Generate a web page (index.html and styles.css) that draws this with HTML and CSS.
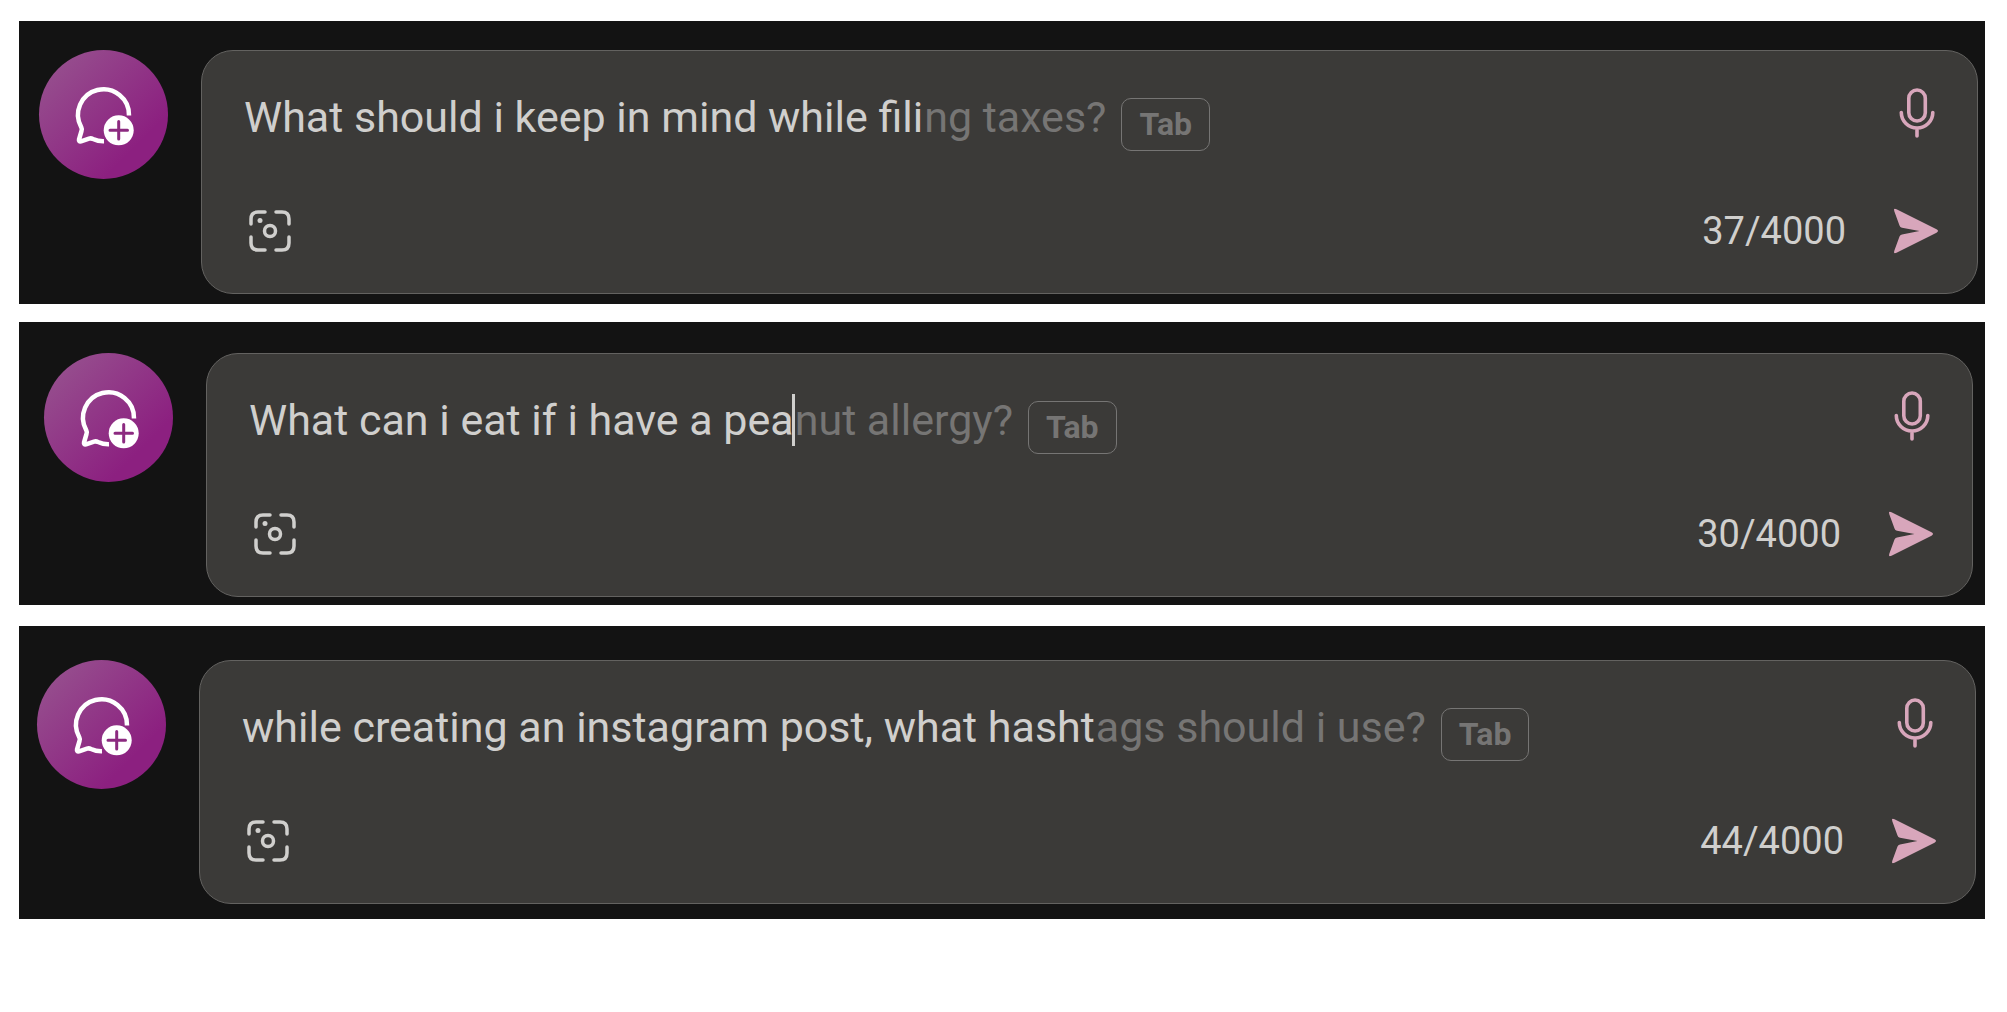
FILE: index.html
```html
<!DOCTYPE html>
<html lang="en">
<head>
  <meta charset="UTF-8" />
  <meta name="viewport" content="width=device-width, initial-scale=1" />
  <title>Chat autocomplete</title>
  <link rel="stylesheet" href="styles.css">
</head>
<body>

  <!-- SHARED ICONS -->
  <svg class="sprite" aria-hidden="true">
    <symbol id="icon-new-topic" viewBox="0 0 129 129">
      <path d="M90 65.500A25.500 25.500 0 1 0 42.300 77.300Q43.200 79 42.500 81L40 89.500Q39.500 91.800 42 91.300L50 88.600Q52 88 54 89Q59.500 91.500 65 91.300" fill="none" stroke="#fff" stroke-width="4.500" stroke-linecap="butt" stroke-linejoin="round" />
      <circle cx="79.700" cy="80.300" r="15" fill="#fff" />
      <path d="M79.700 71.500V89M71 80.300H88.500" stroke="#8c2a80" stroke-width="3" stroke-linecap="round" />
    </symbol>
    <symbol id="icon-mic" viewBox="0 0 48 52">
      <rect x="16.800" y="3" width="16.500" height="31" rx="8.250" fill="none" stroke="currentColor" stroke-width="3.600" />
      <path d="M9.300 25.500A15.750 15.500 0 0 0 40.800 25.500M25 41V49" fill="none" stroke="currentColor" stroke-width="3.600" stroke-linecap="round" />
    </symbol>
    <symbol id="icon-lens" viewBox="0 0 48 48">
      <path d="M5 17V12Q5 5 12 5H19M30 5H36Q43 5 43 12V17M43 30V36Q43 43 36 43H30M19 43H12Q5 43 5 36V30" fill="none" stroke="currentColor" stroke-width="3.500" stroke-linecap="round" />
      <circle cx="24" cy="24" r="5.500" fill="none" stroke="currentColor" stroke-width="3.500" />
      <circle cx="14" cy="13.500" r="2.500" fill="currentColor" />
    </symbol>
    <symbol id="icon-send" viewBox="0 0 48 48">
      <path d="M2.300 4.200Q1 .8 4.500 2.300L44.500 22.300Q47.500 24 44.500 25.700L4.500 45.700Q1 47.200 2.300 43.800L7.500 29.500Q8 27.800 10 27.400L27.500 24L10 20.800Q8 20.400 7.500 18.500Z" fill="currentColor" />
    </symbol>
  </svg>

  <main>
    <!-- TAXES -->
    <form class="panel panel-taxes">
      <button type="button" class="new-topic" aria-label="New topic">
        <svg><use href="#icon-new-topic" /></svg>
      </button>
      <div class="composer">
        <div class="row">
          <div class="prompt">
            <input type="text" class="typed" aria-label="Ask me anything" size="33" value="What should i keep in mind while fili">
            <span class="ghost">ng taxes?</span>
            <kbd class="tab-key">Tab</kbd>
          </div>
          <button type="button" class="icon-button mic" aria-label="Use microphone">
            <svg><use href="#icon-mic" /></svg>
          </button>
        </div>
        <div class="row tools">
          <button type="button" class="icon-button lens" aria-label="Add an image">
            <svg><use href="#icon-lens" /></svg>
          </button>
          <span class="count">37/4000</span>
          <button type="submit" class="icon-button send" aria-label="Submit">
            <svg><use href="#icon-send" /></svg>
          </button>
        </div>
      </div>
    </form>

    <!-- PEANUT ALLERGY -->
    <form class="panel panel-allergy">
      <button type="button" class="new-topic" aria-label="New topic">
        <svg><use href="#icon-new-topic" /></svg>
      </button>
      <div class="composer">
        <div class="row">
          <div class="prompt">
            <input type="text" class="typed" aria-label="Ask me anything" size="27" value="What can i eat if i have a pea">
            <span class="ghost with-caret">nut allergy?</span>
            <kbd class="tab-key">Tab</kbd>
          </div>
          <button type="button" class="icon-button mic" aria-label="Use microphone">
            <svg><use href="#icon-mic" /></svg>
          </button>
        </div>
        <div class="row tools">
          <button type="button" class="icon-button lens" aria-label="Add an image">
            <svg><use href="#icon-lens" /></svg>
          </button>
          <span class="count">30/4000</span>
          <button type="submit" class="icon-button send" aria-label="Submit">
            <svg><use href="#icon-send" /></svg>
          </button>
        </div>
      </div>
    </form>

    <!-- INSTAGRAM -->
    <form class="panel panel-instagram">
      <button type="button" class="new-topic" aria-label="New topic">
        <svg><use href="#icon-new-topic" /></svg>
      </button>
      <div class="composer">
        <div class="row">
          <div class="prompt">
            <input type="text" class="typed" aria-label="Ask me anything" size="42" value="while creating an instagram post, what hasht">
            <span class="ghost">ags should i use?</span>
            <kbd class="tab-key">Tab</kbd>
          </div>
          <button type="button" class="icon-button mic" aria-label="Use microphone">
            <svg><use href="#icon-mic" /></svg>
          </button>
        </div>
        <div class="row tools">
          <button type="button" class="icon-button lens" aria-label="Add an image">
            <svg><use href="#icon-lens" /></svg>
          </button>
          <span class="count">44/4000</span>
          <button type="submit" class="icon-button send" aria-label="Submit">
            <svg><use href="#icon-send" /></svg>
          </button>
        </div>
      </div>
    </form>
  </main>

</body>
</html>
```

FILE: styles.css
```css
* {
  box-sizing: border-box;
}
body {
  margin: 0;
  padding: 21px 22px 0 19px;
  font-family: Roboto, sans-serif;
  background: #fff;
  color: #d0cfcd;
}
button, input {
  margin: 0;
  padding: 0;
  border: 0;
  background: none;
  color: inherit;
  font: inherit;
}
button {
  cursor: pointer;
}
svg {
  display: block;
  width: 100%;
  height: 100%;
}
.sprite {
  position: absolute;
  width: 0;
  height: 0;
}

/* ---------------
   PANELS
   ---------------*/
.panel {
  display: flex;
  align-items: flex-start;
  gap: 33px;
  background: #131313;
}
.panel-taxes {
  padding: 29px 7px 10px 20px;
}
.panel-allergy {
  margin-top: 18px;
  padding: 31px 12px 8px 25px;
}
.panel-instagram {
  margin-top: 21px;
  padding: 34px 9px 15px 18px;
}

.new-topic {
  flex: none;
  width: 129px;
  height: 129px;
  border-radius: 50%;
  background: linear-gradient(135deg, #964f8e 10%, #8c2080 75%);
}

/* ---------------
   COMPOSER
   ---------------*/
.composer {
  flex: 1;
  min-width: 0;
  display: flex;
  flex-direction: column;
  gap: 56px;
  padding: 36px 37px 38px 42px;
  border: 1px solid #636260;
  border-radius: 32px;
  background: #3b3a38;
}
.row {
  display: flex;
  align-items: flex-start;
}
.prompt {
  flex: 1;
  min-width: 0;
  display: flex;
  align-items: flex-start;
  font-size: 43px;
  line-height: 60px;
  white-space: nowrap;
}
.typed {
  field-sizing: content;
  height: 60px;
  outline: none;
}
.ghost {
  position: relative;
  margin-left: 1px;
  color: #767574;
}
.with-caret::before {
  content: "";
  position: absolute;
  top: 4px;
  left: -3px;
  width: 3px;
  height: 52px;
  background: #d0cfcd;
}
.tab-key {
  margin: 11px 0 0 15px;
  padding: 0 17px;
  height: 53px;
  border: 1px solid #767574;
  border-radius: 10px;
  color: #767574;
  font-family: inherit;
  font-size: 32px;
  font-weight: bold;
  line-height: 50px;
}

/* ---------------
   TOOLS
   ---------------*/
.tools {
  align-items: center;
}
.icon-button {
  flex: none;
  width: 48px;
  height: 48px;
}
.mic {
  height: 52px;
  color: #d8a6bb;
}
.lens {
  margin-left: 2px;
}
.send {
  color: #d8a6bb;
}
.count {
  margin-left: auto;
  margin-right: 46px;
  font-size: 38px;
  line-height: 48px;
}
```
